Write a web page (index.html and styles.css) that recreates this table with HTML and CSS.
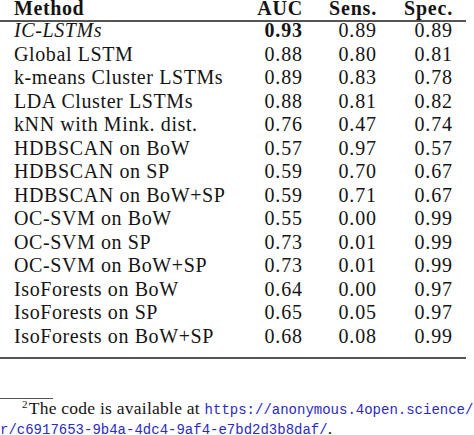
FILE: index.html
```html
<!DOCTYPE html>
<html>
<head>
<meta charset="utf-8">
<link rel="stylesheet" href="styles.css">
</head>
<body>
<div class="page">
  <div class="results">
    <div class="row head">
      <span class="name">Method</span><span class="num">AUC</span><span class="num">Sens.</span><span class="num">Spec.</span>
    </div>
    <div class="body">
      <div class="row"><span class="name it">IC-LSTMs</span><span class="num b">0.93</span><span class="num">0.89</span><span class="num">0.89</span></div>
      <div class="row"><span class="name">Global LSTM</span><span class="num">0.88</span><span class="num">0.80</span><span class="num">0.81</span></div>
      <div class="row"><span class="name">k-means Cluster LSTMs</span><span class="num">0.89</span><span class="num">0.83</span><span class="num">0.78</span></div>
      <div class="row"><span class="name">LDA Cluster LSTMs</span><span class="num">0.88</span><span class="num">0.81</span><span class="num">0.82</span></div>
      <div class="row"><span class="name">kNN with Mink. dist.</span><span class="num">0.76</span><span class="num">0.47</span><span class="num">0.74</span></div>
      <div class="row"><span class="name">HDBSCAN on BoW</span><span class="num">0.57</span><span class="num">0.97</span><span class="num">0.57</span></div>
      <div class="row"><span class="name">HDBSCAN on SP</span><span class="num">0.59</span><span class="num">0.70</span><span class="num">0.67</span></div>
      <div class="row"><span class="name">HDBSCAN on BoW+SP</span><span class="num">0.59</span><span class="num">0.71</span><span class="num">0.67</span></div>
      <div class="row"><span class="name">OC-SVM on BoW</span><span class="num">0.55</span><span class="num">0.00</span><span class="num">0.99</span></div>
      <div class="row"><span class="name">OC-SVM on SP</span><span class="num">0.73</span><span class="num">0.01</span><span class="num">0.99</span></div>
      <div class="row"><span class="name">OC-SVM on BoW+SP</span><span class="num">0.73</span><span class="num">0.01</span><span class="num">0.99</span></div>
      <div class="row"><span class="name">IsoForests on BoW</span><span class="num">0.64</span><span class="num">0.00</span><span class="num">0.97</span></div>
      <div class="row"><span class="name">IsoForests on SP</span><span class="num">0.65</span><span class="num">0.05</span><span class="num">0.97</span></div>
      <div class="row"><span class="name">IsoForests on BoW+SP</span><span class="num">0.68</span><span class="num">0.08</span><span class="num">0.99</span></div>
    </div>
  </div>
  <div class="footnote">
    <div class="fn-rule"></div>
    <p class="fn-text"><sup>2</sup>The code is available at <span class="url">https://anonymous.4open.science/</span><br><span class="url">r/c6917653-9b4a-4dc4-9af4-e7bd2d3b8daf/</span>.</p>
  </div>
</div>
</body>
</html>
```
FILE: styles.css
```css
html, body {
  margin: 0;
  padding: 0;
  background: #ffffff;
}
.page {
  width: 474px;
  height: 435px;
  overflow: hidden;
  color: #141414;
  font-family: "Liberation Serif", "DejaVu Serif", serif;
}
.results {
  width: 466px;
  border-bottom: 2px solid #555555;
}
.row {
  display: grid;
  grid-template-columns: 230px 73px 74px 76px;
  padding-right: 13px;
  font-size: 20px;
  letter-spacing: 0.6px;
  line-height: 23.5px;
}
.row .name {
  padding-left: 14px;
  white-space: nowrap;
}
.row .num {
  text-align: right;
  letter-spacing: 0.9px;
}
.head {
  font-weight: bold;
  line-height: 17px;
  height: 20px;
  border-bottom: 2px solid #555555;
}
.head .num {
  letter-spacing: 0.8px;
}
.body {
  margin-top: -3px;
  padding-bottom: 8.5px;
}
.it {
  font-style: italic;
}
.b {
  font-weight: bold;
}
.footnote {
  margin-top: 39px;
}
.fn-rule {
  width: 53px;
  height: 1px;
  background: #555555;
}
.fn-text {
  margin: 0;
  font-size: 17.5px;
  letter-spacing: 0.25px;
  line-height: 18px;
  text-indent: 22px;
  white-space: nowrap;
}
.fn-text sup {
  font-size: 11px;
  line-height: 0;
  vertical-align: 6px;
  margin-right: 1px;
}
.url {
  font-family: "Liberation Mono", "DejaVu Sans Mono", monospace;
  font-size: 14px;
  letter-spacing: 0;
  color: #2a2ac4;
}
```
